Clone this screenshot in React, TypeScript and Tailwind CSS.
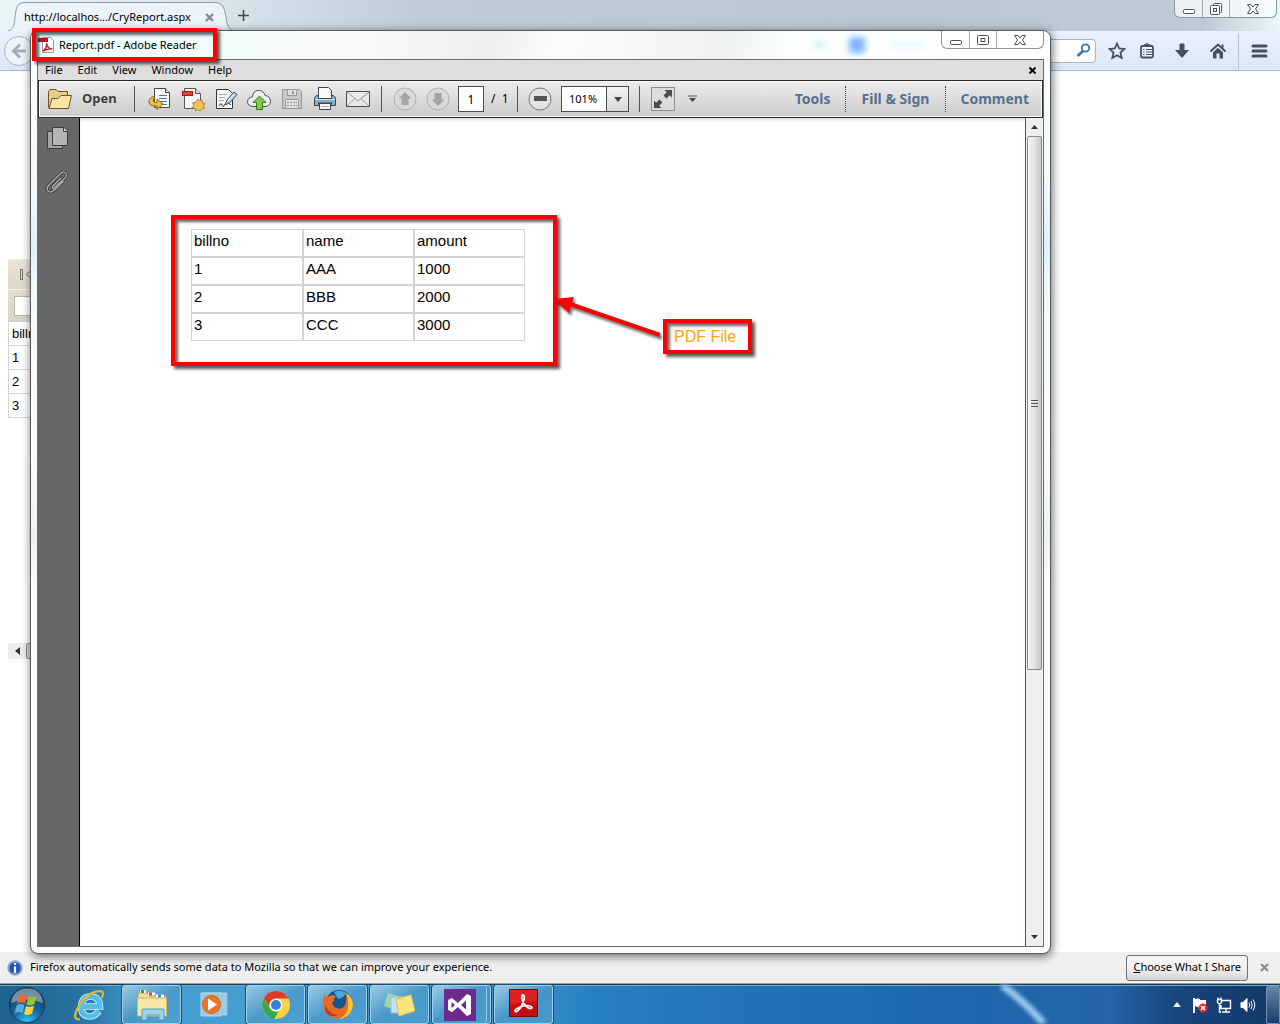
import { useState, type ReactNode } from 'react'

const ROWS = [
  { billno: 1, name: 'AAA', amount: 1000 },
  { billno: 2, name: 'BBB', amount: 2000 },
  { billno: 3, name: 'CCC', amount: 3000 },
]

const RED_BOX = 'border-4 border-[#ff0000] shadow-[3px_3px_3px_rgba(0,0,0,0.65),inset_3px_3px_3px_rgba(0,0,0,0.6)]'

function Minimize() {
  return (
    <svg width="14" height="14" viewBox="0 0 14 14" fill="#fff" stroke="#4c5262">
      <rect x="1.5" y="7.5" width="11" height="4" rx="1" />
    </svg>
  )
}

function Maximize({ restore = false }: { restore?: boolean }) {
  return (
    <svg width="14" height="14" viewBox="0 0 14 14" fill="#fff" stroke="#4c5262">
      {restore ? (
        <>
          <rect x="4.5" y="1.5" width="8" height="9" rx="1" />
          <rect x="1.5" y="3.5" width="9" height="9" rx="1" />
          <rect x="4.5" y="6.5" width="3" height="3" />
        </>
      ) : (
        <>
          <rect x="1.5" y="2.5" width="11" height="9" rx="1" />
          <rect x="5" y="5.5" width="4" height="3" />
        </>
      )}
    </svg>
  )
}

function CloseGlyph() {
  return (
    <svg width="14" height="14" viewBox="0 0 14 14" fill="#fff" stroke="#4c5262">
      <path d="M1.5 2.5h3.4L7 5l2.1-2.5h3.4L9.500 7l3 4.500H9.1L7 9l-2.1 2.500H1.500l3-4.500z" strokeLinejoin="round" />
    </svg>
  )
}

function WindowButtons({ restore = false }: { restore?: boolean }) {
  return (
    <div className="flex h-[18px] shrink-0 rounded-b-md border border-t-0 border-[#8e979d] bg-white/70">
      <button aria-label="Minimize" className="flex w-7 items-center justify-center border-r border-[#a5adb3]"><Minimize /></button>
      <button aria-label={restore ? 'Restore' : 'Maximize'} className="flex w-[27px] items-center justify-center border-r border-[#a5adb3]"><Maximize restore={restore} /></button>
      <button aria-label="Close" className="flex w-[46px] items-center justify-center"><CloseGlyph /></button>
    </div>
  )
}

function BrowserChrome() {
  return (
    <>
      <div className="flex h-[31px] shrink-0 items-end bg-[linear-gradient(90deg,#e9f6f8_0,#d5e2ea_240px,#bfcbd7_420px,#b9c7d3_70%,#bccbd6_94%,#e6f8f9_100%)]">
        <svg width="16" height="29" viewBox="0 0 16 29" className="ml-2 shrink-0">
          <path d="M0 29C5 28 6 24 7 16C8 6 9 1 16 .5V29z" fill="#edf3fa" />
          <path d="M0 28.5C5 28 6 24 7 16C8 6 9 1 16 .5" fill="none" stroke="#8d99a6" />
        </svg>
        <div className="flex h-[29px] items-center gap-[14px] border-t border-[#8d99a6] bg-[#edf3fa]">
          <span className="text-[11px] text-black">http://localhos.../CryReport.aspx</span>
          <button aria-label="Close tab">
            <svg width="9" height="9" viewBox="0 0 9 9" stroke="#818b94" strokeWidth="2.4"><path d="M1 1l7 7M8 1L1 8" /></svg>
          </button>
        </div>
        <svg width="20" height="29" viewBox="0 0 20 29" className="shrink-0">
          <path d="M0 .5C9 .5 10 5 12 15C13 24 15 28 20 29H0z" fill="#edf3fa" />
          <path d="M0 .5C9 .5 10 5 12 15C13 24 15 28 20 28.5" fill="none" stroke="#8d99a6" />
        </svg>
        <button aria-label="New tab" className="mb-[10px] ml-1">
          <svg width="11" height="11" viewBox="0 0 11 11" stroke="#434a52" strokeWidth="1.6"><path d="M5.5 0v11M0 5.5h11" /></svg>
        </button>
        <div className="mr-[3px] ml-auto self-start"><WindowButtons restore /></div>
      </div>
      <div className="flex h-10 shrink-0 items-center border-b border-[#a8b8cb] bg-linear-to-b from-[#eaf2fb] to-[#d9e7f6] text-[#44505e]">
        <button aria-label="Back" className="ml-1 flex size-[30px] shrink-0 items-center justify-center rounded-full border border-[#a9b6c4] bg-[#eef4fb]">
          <svg width="16" height="16" viewBox="0 0 16 16" fill="none" stroke="#a2aeba" strokeWidth="3"><path d="M9 1.5L2.500 8 9 14.500M3 8h12" /></svg>
        </button>
        <div className="ml-3 flex h-6 flex-1 items-center justify-end rounded-sm border border-[#a7b5c5] bg-white pr-1">
          <button aria-label="Search">
            <svg width="15" height="15" viewBox="0 0 15 15" fill="none" stroke="#3873b3"><circle cx="9.500" cy="5" r="3.700" strokeWidth="1.800" /><path d="M7 8L1.500 13" strokeWidth="2.600" /></svg>
          </button>
        </div>
        <button aria-label="Bookmark" className="ml-3">
          <svg width="18" height="18" viewBox="0 0 18 18" fill="none" stroke="currentColor" strokeWidth="1.800"><path d="M9 1.500l2.200 5 5.300.5-4 3.600 1.200 5.400L9 13.200 4.300 16l1.200-5.400-4-3.600 5.300-.5z" /></svg>
        </button>
        <button aria-label="Bookmarks list" className="ml-3">
          <svg width="18" height="18" viewBox="0 0 18 18" fill="none" stroke="currentColor" strokeWidth="1.800">
            <rect x="3" y="4" width="12" height="11.500" rx="1.500" fill="#eef4fb" />
            <path d="M6 4V2.800h1.500L9 1.200l1.500 1.600H12V4" fill="currentColor" strokeWidth="1" />
            <path d="M5 7.500h1.500M8 7.500h6M5 10h1.500M8 10h6M5 12.500h1.500M8 12.500h6" strokeWidth="1.200" />
          </svg>
        </button>
        <button aria-label="Downloads" className="ml-[17px]">
          <svg width="18" height="18" viewBox="0 0 18 18" fill="currentColor"><path d="M6.500 2.500q0-1 1-1h3q1 0 1 1V8H16l-7 8-7-8h4.500z" /></svg>
        </button>
        <button aria-label="Home" className="ml-[18px]">
          <svg width="18" height="18" viewBox="0 0 18 18">
            <path d="M1.500 9.500L9 2.500l7.500 7" fill="none" stroke="currentColor" strokeWidth="2" />
            <path d="M4 10.500L9 5.800l5 4.700V16.500h-3.500V11.500h-3v5H4zM12.500 2.500h2v4l-2-2z" fill="currentColor" />
          </svg>
        </button>
        <span className="ml-[11px] h-9 w-px bg-[#b5c4d4]" />
        <button aria-label="Menu" className="mr-3 ml-3">
          <svg width="17" height="14" viewBox="0 0 17 14" stroke="currentColor" strokeWidth="3" strokeLinecap="round"><path d="M2 2h13M2 7h13M2 12h13" /></svg>
        </button>
      </div>
    </>
  )
}

// Web page left open behind the reader, only its left edge shows
function ReportPage() {
  return (
    <div className="w-1/2 pt-[188px] pl-2 font-['Liberation_Sans',sans-serif]">
      <div className="flex h-[30px] items-center border-t border-[#f0ede0] bg-linear-to-b from-[#e9e6d9] to-[#ddd9c9] pl-3">
        <svg width="14" height="12" viewBox="0 0 14 12" fill="#d7d7d7" stroke="#777"><rect x=".5" y=".5" width="2" height="10" /><path d="M12.500.5v10L6 5.500z" /></svg>
      </div>
      <div className="flex h-8 items-center border-t border-[#f7f5ec] bg-linear-to-b from-[#e2decf] to-[#d9d5c4] pl-[6px]">
        <input aria-label="Find in report" className="h-5 w-24 border border-[#b6b6aa] bg-white" />
      </div>
      <table className="w-full border-collapse text-left text-[13px] leading-4 text-black">
        <thead>
          <tr className="h-6"><th className="border border-[#d3d3d3] px-[3px] font-normal">billno</th></tr>
        </thead>
        <tbody>
          {ROWS.map(r => (
            <tr key={r.billno} className="h-6"><td className="border border-[#d3d3d3] px-[3px]">{r.billno}</td></tr>
          ))}
        </tbody>
      </table>
      <div className="mt-[225px] flex h-4 bg-[#ededed]">
        <span className="flex w-[18px] items-center justify-center"><svg width="5" height="8" viewBox="0 0 5 8"><path d="M5 0v8L0 4z" fill="#333" /></svg></span>
        <span className="w-1/2 rounded-xs border border-[#888] bg-[#d5d5d8]" />
      </div>
    </div>
  )
}

function ToolButton({ label, children }: { label: string; children: ReactNode }) {
  return (
    <button aria-label={label} className="flex size-[26px] shrink-0 items-center justify-center">{children}</button>
  )
}

function Divider() {
  return <span className="h-[26px] w-px shrink-0 bg-[#555]" />
}

const PAGE = 'M4.500 1.500h11l5 5v15h-16z'

function Toolbar() {
  const [page, setPage] = useState('1')
  return (
    <div className="flex h-[38px] shrink-0 items-center border border-[#2b2b2b] bg-linear-to-b from-[#ededed] to-[#cbcbcb] pr-[13px] pl-2 shadow-[inset_0_0_0_1px_#f8f8f8]">
      <button className="flex w-[69px] items-center gap-[9px] text-[13px] font-bold text-[#3d3d3d]">
        <svg width="26" height="22" viewBox="0 0 26 22" stroke="#6c5424" strokeLinejoin="round" className="shrink-0">
          <path d="M1.500 19.500V3.500L3 1.500h6l2 2h9.500V19.500z" fill="#e5cd87" />
          <path d="M2 20.500L5 10.500h6l3-3h10.500L21.500 20.500z" fill="#f8e4a4" />
        </svg>
        Open
      </button>
      <span className="ml-[18px]" /><Divider />
      <div className="ml-3 flex items-center gap-[7px]">
        <ToolButton label="Open a file from the cloud">
          <svg width="26" height="26" viewBox="0 0 26 26"><path d="M7.500 2.500h11l4 4v15h-15z" fill="#fafafa" stroke="#444" /><path d="M18.500 2.500v4h4" fill="#ddd" stroke="#444" /><path d="M12 9.500h8M12 12.500h8M12 15.500h8M14 18.500h6" stroke="#3478c4" /><path d="M5.500 10.500Q0 14 3 18.500 5 20.500 10 20v3.500l6-5.500-6-5v3.500Q4 17 7.500 11.500z" fill="#f4bf3e" stroke="#91640e" /></svg>
        </ToolButton>
        <ToolButton label="Create PDF">
          <svg width="26" height="26" viewBox="0 0 26 26"><path d={PAGE} fill="#f5f5f5" stroke="#555" transform="translate(0 1)" /><path d="M15.500 2.500v5h5" fill="#ddd" stroke="#555" /><rect x="2.500" y="5.500" width="10" height="4" fill="#e24444" stroke="#9e1919" /><path d="M18 13l1.500 2 2.500-1 .2 2.800 2.800.7-1.500 2.300 1 2.700-2.800.2L20 25l-2-1.500-2.500 1.500-.5-2.800-2.800-.7 1.500-2-1-2.700 2.800-.2z" fill="#f3c251" stroke="#b8872a" /></svg>
        </ToolButton>
        <ToolButton label="Sign">
          <svg width="26" height="26" viewBox="0 0 26 26"><path d="M3.500 3.500h12l4 4v15h-16z" fill="#f6f6f6" stroke="#333" /><path d="M6 8.500h8M6 11.500h6M6 14.500h5" stroke="#aaa" /><path d="M6 20q2-4 3-1t3-.5 6 .5" fill="none" stroke="#333" /><path d="M12 19l2-5 7-8 3 2.500-7.500 8.500z" fill="#bad2e5" stroke="#344c62" /><path d="M15 15l6-7" stroke="#fff" /></svg>
        </ToolButton>
        <ToolButton label="Upload">
          <svg width="26" height="26" viewBox="0 0 26 26"><path d="M7 20.500Q1.500 20 1.500 15.500 2 11 6.500 11 7 4.500 12.500 4.500 17.500 4 19 9.500q5.500.5 5.500 6-.5 4.500-5.500 5z" fill="#eee" stroke="#555" /><path d="M13.500 10L20 16.500h-3.500v7h-6v-7H7z" fill="#82c94a" stroke="#35771a" /></svg>
        </ToolButton>
        <ToolButton label="Save">
          <svg width="26" height="26" viewBox="0 0 26 26" fill="#c9c9c9" stroke="#999"><path d="M3.500 3.500h17l2 2v17h-19z" /><path d="M8.500 3.500h9v6h-9zM6.500 13.500h13v9h-13z" fill="#dedede" /><path d="M14 5v3" strokeWidth="2" /><path d="M8 16.500h10M8 19.500h10" strokeDasharray="2 1" /></svg>
        </ToolButton>
        <ToolButton label="Print">
          <svg width="26" height="26" viewBox="0 0 26 26" stroke="#3c4650"><path d="M4.500 9.500L2.500 12v7.500h21V12l-2-2.500z" fill="#8aadc9" /><path d="M6.500 1.500h10l3 3v8h-13z" fill="#fafafa" /><path d="M3 13.500h20" stroke="#c7dcec" /><path d="M6 17.500h14" strokeWidth="2" /><path d="M7.500 17.500h11v6h-11z" fill="#f4f4f4" /><path d="M9.500 20.500h7" stroke="#aaa" /></svg>
        </ToolButton>
        <ToolButton label="E-mail">
          <svg width="26" height="26" viewBox="0 0 26 26" fill="#e9e9e9" stroke="#4c4c4c"><path d="M1.500 5.500h23v15h-23z" /><path d="M2 6l11 9L24 6M2 20l8-7.500M24 20l-8-7.500" fill="none" stroke="#999" /></svg>
        </ToolButton>
      </div>
      <span className="ml-[10px]" /><Divider />
      <div className="ml-[10px] flex items-center gap-[7px]">
        <ToolButton label="Previous page">
          <svg width="26" height="26" viewBox="0 0 26 26" fill="#d9d9d9" stroke="#b0b0b0"><circle cx="13" cy="13" r="11" /><path d="M13 6l6.500 6.500h-3V19h-7v-6.500h-3z" fill="#a5a5a5" stroke="none" /></svg>
        </ToolButton>
        <ToolButton label="Next page">
          <svg width="26" height="26" viewBox="0 0 26 26" fill="#d9d9d9" stroke="#b0b0b0"><circle cx="13" cy="13" r="11" /><path d="M13 20l6.500-6.500h-3V7h-7v6.500h-3z" fill="#a5a5a5" stroke="none" /></svg>
        </ToolButton>
      </div>
      <input aria-label="Page number" value={page} onChange={e => setPage(e.target.value)} className="ml-[7px] h-[26px] w-[26px] shrink-0 border border-[#4d4d4d] bg-white text-center text-xs text-black" />
      <span className="ml-[7px] w-[17px] shrink-0 text-xs whitespace-nowrap text-black">/&nbsp; 1</span>
      <span className="ml-[9px]" /><Divider />
      <span className="ml-[9px]" />
      <ToolButton label="Zoom out">
        <svg width="26" height="26" viewBox="0 0 26 26" fill="#e4e4e4" stroke="#777"><circle cx="13" cy="13" r="11" /><rect x="7" y="10" width="13" height="5" fill="#555" stroke="none" /></svg>
      </ToolButton>
      <div className="relative ml-2 h-[26px] w-[68px] shrink-0 border border-[#4d4d4d] bg-white">
        <select aria-label="Zoom" className="block h-6 w-full appearance-none pl-[7px] text-[11px] text-black">
          <option>101%</option>
        </select>
        <span className="pointer-events-none absolute inset-y-0 right-0 flex w-[22px] items-center justify-center border-l border-[#4d4d4d] bg-linear-to-b from-[#f3f3f3] to-[#d8d8d8]">
          <svg width="8" height="5" viewBox="0 0 8 5"><path d="M0 0h8L4 5z" fill="#444" /></svg>
        </span>
      </div>
      <span className="ml-[10px]" /><Divider />
      <span className="ml-[10px]" />
      <ToolButton label="Fit to window">
        <svg width="26" height="26" viewBox="0 0 26 26"><rect x="1.500" y="1.500" width="23" height="23" fill="#dcdcdc" stroke="#8e8e8e" /><path d="M14.500 4H22v7.500l-2.300-2.300-3.200 3.200-3-3 3.200-3.200zM4 14.500V22h7.500l-2.300-2.300 3.200-3.200-3-3-3.200 3.200z" fill="#4c4c4c" /></svg>
      </ToolButton>
      <button aria-label="More tools" className="ml-3">
        <svg width="9" height="8" viewBox="0 0 9 8"><path d="M0 1h9" stroke="#555" /><path d="M1 3h7L4.500 7z" fill="#444" /></svg>
      </button>
      <div className="ml-auto flex h-[26px] items-center text-sm font-bold text-[#56708f]">
        <button className="pr-[14px] whitespace-nowrap">Tools</button>
        <button className="h-full border-x border-dotted border-[#444] px-4 whitespace-nowrap">Fill &amp; Sign</button>
        <button className="pl-[14px]">Comment</button>
      </div>
    </div>
  )
}

function PdfPage() {
  return (
    <div className="flex min-w-0 flex-1 items-start bg-white pt-[97px] pl-[91px] font-['Liberation_Sans',sans-serif] shadow-[inset_0_4px_4px_-2px_rgba(0,0,0,0.15)]">
      <div className={`shrink-0 pt-[10px] pr-7 pb-[21px] pl-4 ${RED_BOX}`}>
        <table className="w-[334px] table-fixed border-separate border-spacing-0 border border-[#d3d3d3] text-left text-[15px] leading-[17px] text-black">
          <thead>
            <tr>
              {['billno', 'name', 'amount'].map(c => (
                <th key={c} className="h-[28px] border-r-2 border-b-2 border-[#d3d3d3] pb-[6px] pl-[2px] font-normal first:w-[112px] last:w-[109px] last:border-r-0">{c}</th>
              ))}
            </tr>
          </thead>
          <tbody>
            {ROWS.map(r => (
              <tr key={r.billno} className="group">
                {[r.billno, r.name, r.amount].map(v => (
                  <td key={v} className="h-[28px] border-r-2 border-b-2 border-[#d3d3d3] pb-[6px] pl-[2px] group-last:h-[26px] group-last:border-b-0 last:border-r-0">{v}</td>
                ))}
              </tr>
            ))}
          </tbody>
        </table>
      </div>
      <svg width="106" height="60" viewBox="0 0 106 60" className="mt-[74px] shrink-0 overflow-visible drop-shadow-[2px_3px_1px_rgba(0,0,0,0.5)]">
        <path d="M10 14L103 46" stroke="#f00" strokeWidth="4" />
        <path d="M-4 10L17 8 12 24z" fill="#f00" />
      </svg>
      <span className={`mt-[104px] shrink-0 py-1 pr-3 pl-[7px] text-base leading-[19px] text-[#ffa500] ${RED_BOX}`}>PDF File</span>
    </div>
  )
}

function ReaderWindow() {
  return (
    <section className="absolute top-[30px] right-[229px] bottom-[70px] left-[30px] flex flex-col rounded-lg border border-[#565b5e] bg-[#fbfdfd] bg-[linear-gradient(180deg,#fdffff_0,#f6fafb_150px,#dff1fb_215px,#f4fafa_260px,#fdfefe_45%,#eef2f3_55%,#fdfdfd_60%)] px-[6px] pb-[6px] shadow-[1px_2px_10px_rgba(0,0,0,0.6)]">
      <header className="-mx-[6px] flex h-7 shrink-0 items-center justify-between rounded-t-lg bg-[linear-gradient(100deg,#eaffff_0,#f1fbfa_190px,#fafafa_30%,#eef0f0_45%,#fbfcfc_52%,#eff2f2_68%,#fbffff_75%,#ffffff_100%)] pr-[6px] pl-[7px]">
        <div className="relative flex items-center gap-1">
          <span className={`pointer-events-none absolute -top-[7px] -right-5 -bottom-[6px] -left-[6px] ${RED_BOX}`} />
          <svg width="17" height="18" viewBox="0 0 17 18">
            <path d="M4.500 1.500h8l3 3v12h-11z" fill="#fff" stroke="#9a9a9a" />
            <path d="M0 2h10v4H0z" fill="#b5171c" />
            <path d="M5 15c3-2 4-5 3.500-8 .5 4 3 6 6 6-4-.5-6 .3-9.500 2z" fill="none" stroke="#c11f25" strokeWidth="1.400" />
          </svg>
          <h1 className="text-[11px] leading-5 whitespace-nowrap text-black">Report.pdf - Adobe Reader</h1>
        </div>
        <span className="mr-24 ml-auto flex items-center gap-6 blur-[3px]">
          <span className="h-2 w-3 bg-[#d3f5f5]" />
          <span className="h-4 w-4 bg-[#80b5ff]" />
          <span className="h-1 w-9 bg-[#d9f4f8]" />
        </span>
        <div className="-ml-20 self-start"><WindowButtons /></div>
      </header>
      <div className="flex min-h-0 flex-1 flex-col border border-[#6b6b6b] bg-white">
        <nav className="flex h-5 shrink-0 items-center gap-[15px] bg-[#dedede] px-[7px] text-[11px] text-black">
          {['File', 'Edit', 'View', 'Window', 'Help'].map(m => <button key={m}>{m}</button>)}
          <button aria-label="Close document" className="ml-auto">
            <svg width="7" height="7" viewBox="0 0 7 7" stroke="#000" strokeWidth="2"><path d="M.5.5l6 6M6.500.5l-6 6" /></svg>
          </button>
        </nav>
        <Toolbar />
        <div className="flex min-h-0 flex-1">
          <aside className="flex w-[42px] shrink-0 flex-col items-center gap-5 border-r border-black bg-[#676767] pt-2 pr-1">
            <button aria-label="Page thumbnails">
              <svg width="24" height="24" viewBox="0 0 24 24" fill="#a5a5a5" stroke="#3a3a3a"><path d="M2.500 5.500h15v17h-15z" /><path d="M7.500 1.500h11l4 4v14h-15z" fill="#b5b5b5" /><path d="M18.500 1.500v4h4" fill="#ddd" /></svg>
            </button>
            <button aria-label="Attachments">
              <svg width="24" height="24" viewBox="0 0 24 24" fill="none" strokeLinecap="round">
                <path d="M16 8L8 16q-1.500 2 .5 2.500L20 8q3-4-.5-5.500-2-1-4.500 1.500L4 15q-3.500 4-.5 6.500 2.500 1.500 6-1.500L18 11.500" stroke="#3e3e3e" strokeWidth="3" />
                <path d="M16 8L8 16q-1.500 2 .5 2.500L20 8q3-4-.5-5.500-2-1-4.500 1.500L4 15q-3.500 4-.5 6.500 2.500 1.500 6-1.500L18 11.500" stroke="#b0b0b0" strokeWidth="1.300" />
              </svg>
            </button>
          </aside>
          <PdfPage />
          <div className="flex w-[18px] shrink-0 flex-col items-center border-l border-[#555] bg-[#efefef]">
            <button aria-label="Scroll up" className="flex h-[18px] items-center"><svg width="7" height="4" viewBox="0 0 7 4"><path d="M0 4h7L3.500 0z" fill="#333" /></svg></button>
            <div className="flex h-[calc(65%-4px)] w-[15px] items-center justify-center rounded-xs border border-[#8b8b8b] bg-linear-to-r from-[#f5f5f5] via-[#e3e3e6] to-[#c4c4cb]">
              <svg width="7" height="8" viewBox="0 0 7 8" stroke="#555"><path d="M0 1.500h7M0 4.500h7M0 7.500h7" /></svg>
            </div>
            <button aria-label="Scroll down" className="mt-auto flex h-[18px] items-center"><svg width="7" height="4" viewBox="0 0 7 4"><path d="M0 0h7L3.500 4z" fill="#333" /></svg></button>
          </div>
        </div>
      </div>
    </section>
  )
}

function TaskButton({ label, open = false, children }: { label: string; open?: boolean; children: ReactNode }) {
  return (
    <button
      aria-label={label}
      className={open
        ? 'flex h-[39px] w-[59px] items-center justify-center rounded-[3px] border border-[#a5cfe4] bg-linear-to-br from-[#a4d0e8]/90 via-[#4c98c7]/70 to-[#4fa0d2]/70 shadow-[0_0_0_1px_#174f78]'
        : 'flex h-[39px] w-[59px] items-center justify-center'}
    >
      {children}
    </button>
  )
}

function Taskbar() {
  return (
    <footer className="flex h-10 shrink-0 items-center gap-[3px] border-t border-[#25394b] bg-[linear-gradient(90deg,#1f638f_0,#2673a3_80px,#459dcf_150px,#459fd3_330px,#3d95cd_500px,#287fc0_600px,#2273b6_750px,#1d67ad_960px,#2464a8_1110px,#18447c_1180px,#123966_1280px)] shadow-[inset_0_1px_0_#6badd2]">
      <button aria-label="Start" className="ml-2 flex w-[49px]">
        <svg width="38" height="38" viewBox="0 0 38 38">
          <defs><radialGradient id="orb" cx=".5" cy="1" r=".9"><stop offset="0" stopColor="#35c8f7" /><stop offset=".45" stopColor="#176ba5" /><stop offset="1" stopColor="#13405f" /></radialGradient></defs>
          <circle cx="19" cy="19" r="17.500" fill="url(#orb)" stroke="#16384f" />
          <path d="M3 17Q5 3 19 2.500T35 17Q19 10 3 17z" fill="#fff" opacity=".4" />
          <path d="M11 10q4-2.500 8-.5l-2 8q-4-2-8 .5z" fill="#ee672f" /><path d="M20.500 10.500q4 2 8-.5l-2 8q-4 2.500-8 .5z" fill="#9ac52f" />
          <path d="M8.500 19.500q4-2.500 8-.5l-2 8q-4-2-8 .5z" fill="#5fa9e5" /><path d="M18 20q4 2 8-.5l-2 8q-4 2.500-8 .5z" fill="#ffd03b" />
        </svg>
      </button>
      <TaskButton label="Internet Explorer">
        <svg width="34" height="34" viewBox="0 0 34 34" fill="none">
          <path d="M26 23Q22 28.500 16.500 28.500 8 28 8 18.500 9 8.500 17.500 8.500q9 0 9.500 10H10" stroke="#d7f3ff" strokeWidth="6.500" />
          <path d="M26 23Q22 28.500 16.500 28.500 8 28 8 18.500 9 8.500 17.500 8.500q9 0 9.500 10H10" stroke="#55bdee" strokeWidth="5" />
          <path d="M7 31.500Q-1 32 4 21.500 10 9 20 4.500q10-3.500 10 1.500 0 2-1.500 4" stroke="#e9b71e" strokeWidth="2.200" />
        </svg>
      </TaskButton>
      <TaskButton label="Windows Explorer" open>
        <svg width="34" height="32" viewBox="0 0 34 32">
          <path d="M3 26V4h9l2 3h17v20z" fill="#f5dfa0" stroke="#b89a4c" /><path d="M5 2.500h6M13 5h7M21 7h8" stroke="#fff" strokeWidth="3" /><path d="M6 2.500h3" stroke="#28a745" strokeWidth="3" /><path d="M14 5h3" stroke="#d44727" strokeWidth="3" /><path d="M23 7h3" stroke="#318cd1" strokeWidth="3" />
          <path d="M2.500 9h29v18h-29z" fill="#f7e6a6" stroke="#d2b764" /><path d="M7 31V21q0-1 1-1h20q1 0 1 1v10h-5v-5H12v5z" fill="#9fd1e9" stroke="#5b9abd" />
        </svg>
      </TaskButton>
      <TaskButton label="Windows Media Player">
        <svg width="28" height="26" viewBox="0 0 28 26"><path d="M5 1h22v22H5z" fill="#77b6d9" stroke="#9dcce4" /><path d="M23 1v22M25 1v22" stroke="#c8e3f1" /><path d="M1 1h20v23H1z" fill="#9bc7de" stroke="#b5d8e9" /><circle cx="11.500" cy="12.500" r="9" fill="#ed7524" stroke="#dc5b17" /><path d="M8 6.500v12l9-6z" fill="#fff" /></svg>
      </TaskButton>
      <TaskButton label="Chrome" open>
        <svg width="30" height="30" viewBox="0 0 30 30">
          <circle cx="15" cy="15" r="14" fill="#ffd23f" />
          <path d="M3 8A14 14 0 0 1 27.500 8.500H15A6.500 6.500 0 0 0 9 18z" fill="#dd3b31" />
          <path d="M3 8l6 10.500a6.500 6.500 0 0 0 8.500 2.500L13.500 29A14 14 0 0 1 3 8z" fill="#35a853" />
          <circle cx="15" cy="15" r="6.300" fill="#fff" /><circle cx="15" cy="15" r="5" fill="#397fd0" />
        </svg>
      </TaskButton>
      <TaskButton label="Firefox" open>
        <svg width="32" height="31" viewBox="0 0 32 31">
          <circle cx="17" cy="14.500" r="13.500" fill="#16548f" /><path d="M12 3q6-3 12 1-2 5-8 6z" fill="#49a7dd" />
          <path d="M3 4q0 4 2 4 5-3 9-.5l-2 2q1 3-2 4 2 7 9 6 5-2 5-7 1-7-1-9 8 5 8 13-2 13-15 13.500Q2 28 1 16 0 11 3 4z" fill="#e66b25" />
          <path d="M23 3q8 5 8 13-2 13-14 14 9-4 9-13 1-9-3-14z" fill="#f9c537" /><path d="M3 15q3 10 13 11Q6 30 3 21z" fill="#c83924" />
        </svg>
      </TaskButton>
      <TaskButton label="Sticky Notes" open>
        <svg width="34" height="28" viewBox="0 0 34 28"><path d="M5 2l14 4-4 14L1 15z" fill="#9ed89e" /><path d="M8 6h16v16H8z" fill="#bfe0f7" stroke="#94bfe0" /><path d="M13 8l15-4 4 16-16 5z" fill="#f9e37d" stroke="#dcc14c" /></svg>
      </TaskButton>
      <div className="flex rounded-[3px] border border-[#a5cfe4] pr-[3px] shadow-[0_0_0_1px_#174f78]">
        <button aria-label="Visual Studio" className="flex h-[37px] w-[54px] items-center justify-center rounded-[3px] border-r border-[#a5cfe4] bg-linear-to-br from-[#a4d0e8]/90 via-[#4c98c7]/70 to-[#4fa0d2]/70">
          <svg width="32" height="32" viewBox="0 0 32 32"><path d="M0 0h32v32H0z" fill="#6b2a8d" /><path d="M4 11l4-2 6 5 9-9 4 2v18l-4 2-9-9-6 5-4-2zM7.500 13v6l3.500-3zM22 11.500L17 16l5 4.500z" fill="#fff" fillRule="evenodd" /></svg>
        </button>
      </div>
      <TaskButton label="Adobe Reader" open>
        <svg width="29" height="28" viewBox="0 0 29 28" className="mb-1"><path d="M.5.5h28v27H.5z" fill="#c40c10" stroke="#6f0a0a" /><path d="M1 1h27v12Q14 12 1 16z" fill="#e33" opacity=".5" /><path d="M14.500 6c2 2 0 7-2 11s-6 7-6.500 5 7-5.500 12-5.500 6 2.500 4 3-7-3-8.500-8-.5-6 1-5.500z" fill="none" stroke="#fff" strokeWidth="1.700" /></svg>
      </TaskButton>
      <svg viewBox="0 0 70 39" className="ml-auto h-[39px] w-[70px] shrink-0 blur-[2px]"><path d="M14 0Q38 18 56 39" fill="none" stroke="#9ecbf3" strokeWidth="7" /></svg>
      <div className="ml-[112px] flex items-center gap-2 pr-[7px]">
        <button aria-label="Show hidden icons" className="mr-[3px]"><svg width="8" height="5" viewBox="0 0 8 5"><path d="M0 5h8L4 0z" fill="#e6eef5" /></svg></button>
        <button aria-label="Action Center">
          <svg width="16" height="16" viewBox="0 0 16 16"><path d="M2 1v15" stroke="#fff" strokeWidth="2" /><path d="M3 2q3-1 5 0v1h6v8H8L3 9z" fill="#fff" /><circle cx="11" cy="11" r="4.500" fill="#d9322b" /><path d="M9 9l4 4M13 9l-4 4" stroke="#fff" strokeWidth="1.400" /></svg>
        </button>
        <button aria-label="Network">
          <svg width="16" height="16" viewBox="0 0 16 16" fill="none" stroke="#fff" strokeWidth="1.400"><path d="M6 3.500h8.500v8H5V8M10 12v2.500M6 15h8M1 2.500h5M2 .5v2M5 .5v2M1.500 3v2.500L3.500 7 5.500 5.500V3M3.500 7v8H5" /></svg>
        </button>
        <button aria-label="Volume">
          <svg width="16" height="16" viewBox="0 0 16 16" fill="none" stroke="#fff"><path d="M1 5.500h2L7 1.500v13l-4-4H1z" fill="#fff" /><path d="M9 5.500q1.500 2.500 0 5M11 4q2.500 4 0 8M13 2.500q3.500 5.500 0 11" /></svg>
        </button>
      </div>
      <button aria-label="Show desktop" className="h-[38px] w-[14px] rounded-xs border border-[#6d94b8] bg-linear-to-b from-[#6585a3] to-[#193e68]" />
    </footer>
  )
}

export default function App() {
  return (
    <main className="relative flex h-screen flex-col overflow-hidden bg-white font-['Noto_Sans',sans-serif]">
      <BrowserChrome />
      <div className="min-h-0 flex-1 overflow-hidden bg-white"><ReportPage /></div>
      <div className="flex h-8 shrink-0 items-center border-b border-[#9b9b9b] bg-[#efefef] pr-[11px] pl-[7px] text-black">
        <svg width="16" height="16" viewBox="0 0 16 16"><circle cx="8" cy="8" r="7.300" fill="#2456b4" stroke="#a9b5c8" /><circle cx="8" cy="8" r="6.200" fill="none" stroke="#fff" strokeWidth=".6" /><path d="M8 3v2M8 6.500V13" stroke="#fff" strokeWidth="2.200" /></svg>
        <p className="ml-[7px] text-[11px] whitespace-nowrap">Firefox automatically sends some data to Mozilla so that we can improve your experience.</p>
        <button className="ml-auto h-[26px] rounded-[3px] border border-[#707070] bg-linear-to-b from-[#f3f3f3] from-50% to-[#d4d4d4] px-[6px] text-[11px] whitespace-nowrap"><u>C</u>hoose What I Share</button>
        <button aria-label="Dismiss" className="ml-3">
          <svg width="9" height="9" viewBox="0 0 9 9" stroke="#858d95" strokeWidth="2.200"><path d="M1 1l7 7M8 1L1 8" /></svg>
        </button>
      </div>
      <Taskbar />
      <ReaderWindow />
    </main>
  )
}
